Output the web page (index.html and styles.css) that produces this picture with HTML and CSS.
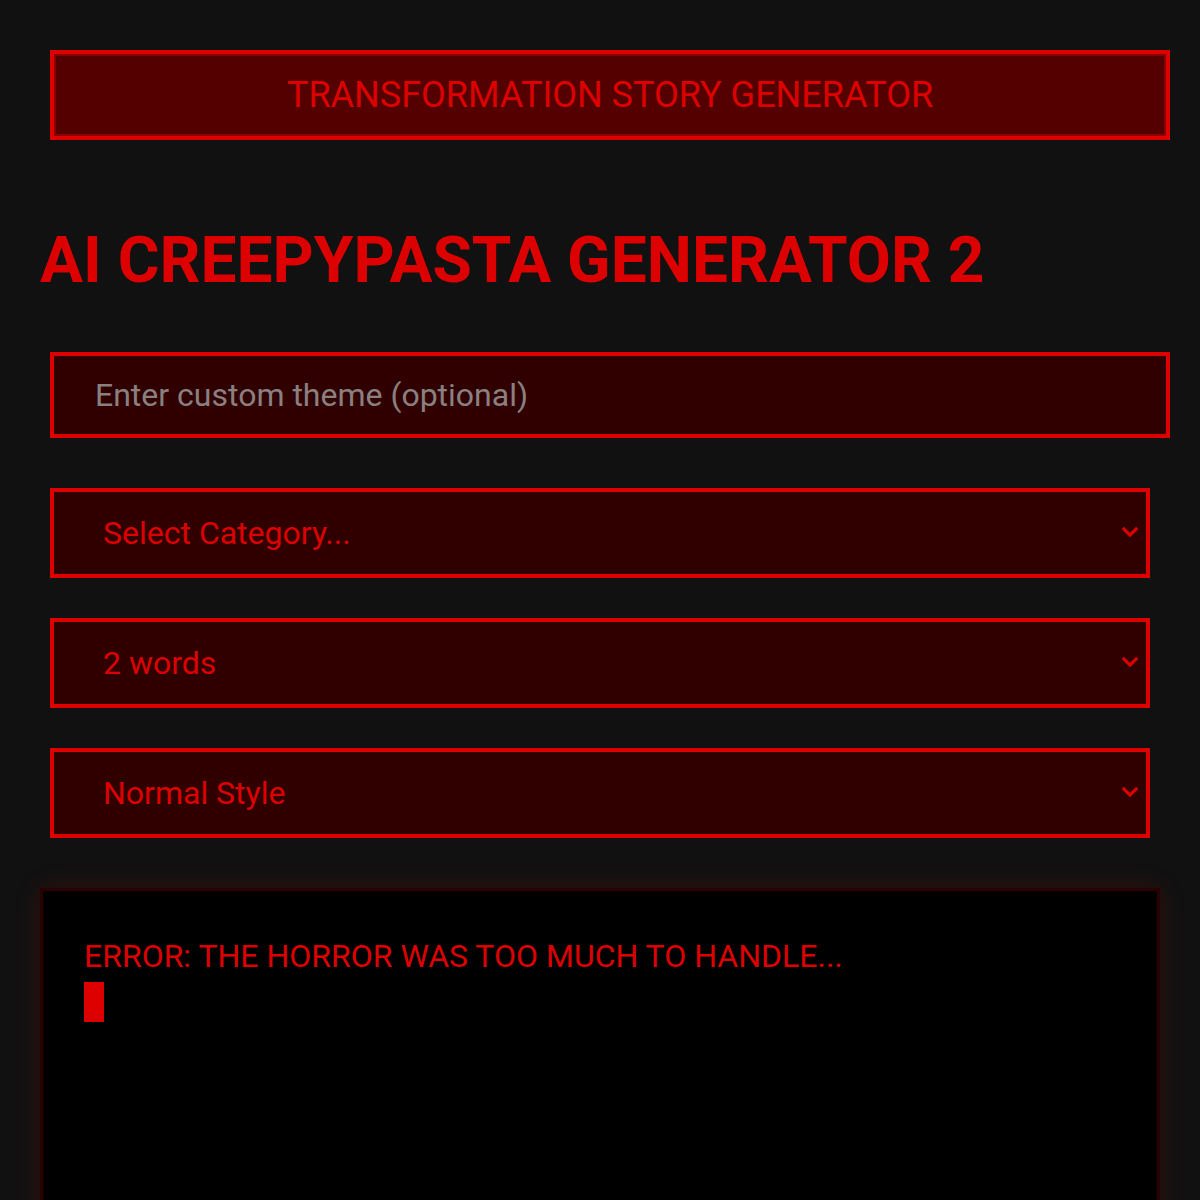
FILE: index.html
```html
<!DOCTYPE html>
<html lang="en">
<head>
    <meta charset="UTF-8">
    <title>AI Creepypasta Generator 2</title>
    <link rel="stylesheet" href="styles.css">
</head>
<body>
    <div class="page">
        <a class="banner" href="#">TRANSFORMATION STORY GENERATOR</a>

        <h1 class="title">AI CREEPYPASTA GENERATOR 2</h1>

        <input class="theme" type="text" placeholder="Enter custom theme (optional)">

        <div class="field first">
            <select class="pick">
                <option>Select Category...</option>
            </select>
            <svg class="chev" viewBox="0 0 20 12"><path d="M2 2l8 8 8-8"/></svg>
        </div>
        <div class="field">
            <select class="pick">
                <option>2 words</option>
            </select>
            <svg class="chev" viewBox="0 0 20 12"><path d="M2 2l8 8 8-8"/></svg>
        </div>
        <div class="field">
            <select class="pick">
                <option>Normal Style</option>
            </select>
            <svg class="chev" viewBox="0 0 20 12"><path d="M2 2l8 8 8-8"/></svg>
        </div>

        <div class="output">
            <p class="story">ERROR: THE HORROR WAS TOO MUCH TO HANDLE...</p>
            <span class="cursor"></span>
        </div>
    </div>
</body>
</html>
```

FILE: styles.css
```css
* {
    margin: 0;
    padding: 0;
    box-sizing: border-box;
}

html {
    height: 100%;
    background: #111111;
}

body {
    font-family: Roboto, "Liberation Sans", sans-serif;
    color: #dd0000;
    overflow: hidden;
    height: 100%;
}

.page {
    display: flex;
    flex-direction: column;
    padding: 50px 0 0 40px;
}

.banner {
    display: flex;
    align-items: center;
    justify-content: center;
    margin-left: 10px;
    width: 1120px;
    height: 90px;
    background: #550000;
    border: 4px solid #dd0000;
    box-shadow: inset 0 0 0 2px #8a0000;
    color: #dd0000;
    font-size: 36px;
    text-decoration: none;
}

.title {
    margin-top: 83px;
    font-size: 64px;
    font-weight: 700;
    line-height: 75px;
    color: #dd0000;
}

.theme {
    margin: 54px 0 0 10px;
    width: 1120px;
    height: 86px;
    padding-left: 41px;
    background: #300000;
    border: 4px solid #dd0000;
    outline: none;
    font-family: Roboto, "Liberation Sans", sans-serif;
    font-size: 32px;
    color: #dd0000;
}

.theme::placeholder {
    color: #8a8080;
}

.field {
    position: relative;
    margin: 40px 0 0 10px;
    width: 1100px;
    height: 90px;
}

.field.first {
    margin-top: 50px;
}

.pick {
    appearance: none;
    -webkit-appearance: none;
    width: 100%;
    height: 100%;
    padding-left: 49px;
    background: #300000;
    border: 4px solid #dd0000;
    border-radius: 0;
    outline: none;
    font-family: Roboto, "Liberation Sans", sans-serif;
    font-size: 32px;
    color: #dd0000;
}

.chev {
    position: absolute;
    right: 11px;
    top: 38px;
    width: 18px;
    height: 11px;
    fill: none;
    stroke: #dd0000;
    stroke-width: 3.5;
    pointer-events: none;
}

.output {
    margin-top: 50px;
    width: 1120px;
    height: 400px;
    padding: 45px 41px;
    background: #000000;
    border: 3px solid #2a0000;
    box-shadow: 0 0 24px rgba(200, 0, 0, 0.18);
}

.story {
    font-size: 32px;
    line-height: 40px;
}

.cursor {
    display: block;
    margin-top: 6px;
    width: 20px;
    height: 40px;
    background: #dd0000;
}
```
